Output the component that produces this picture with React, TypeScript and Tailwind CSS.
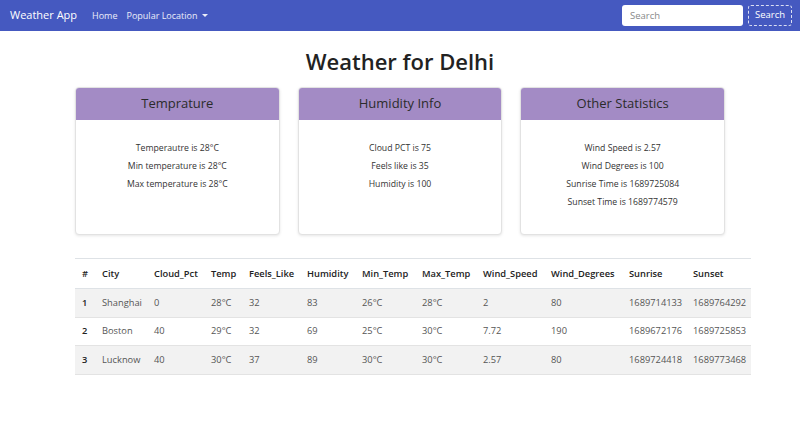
import React from 'react';

const cards = [
  { title: 'Temprature', lines: ['Temperautre is 28°C', 'Min temperature is 28°C', 'Max temperature is 28°C'] },
  { title: 'Humidity Info', lines: ['Cloud PCT is 75', 'Feels like is 35', 'Humidity is 100'] },
  {
    title: 'Other Statistics',
    lines: ['Wind Speed is 2.57', 'Wind Degrees is 100', 'Sunrise Time is 1689725084', 'Sunset Time is 1689774579'],
  },
];

const headers = ['#', 'City', 'Cloud_Pct', 'Temp', 'Feels_Like', 'Humidity', 'Min_Temp', 'Max_Temp', 'Wind_Speed', 'Wind_Degrees', 'Sunrise', 'Sunset'];
const widths = [20, 52, 57, 38, 58, 55, 60, 61, 68, 78, 64, 65];

const rows = [
  ['1', 'Shanghai', '0', '28°C', '32', '83', '26°C', '28°C', '2', '80', '1689714133', '1689764292'],
  ['2', 'Boston', '40', '29°C', '32', '69', '25°C', '30°C', '7.72', '190', '1689672176', '1689725853'],
  ['3', 'Lucknow', '40', '30°C', '37', '89', '30°C', '30°C', '2.57', '80', '1689724418', '1689773468'],
];

export default function App() {
  return (
    <div className="min-h-[448px] bg-white text-[#212529]" style={{ fontFamily: '"Open Sans", "Noto Sans", sans-serif' }}>
      {/* Navbar */}
      <nav className="flex h-[31px] items-center bg-[#4559c0] pl-[10px] pr-[8px]">
        <span className="text-[11px] text-white">Weather App</span>
        <a className="ml-[15px] text-[9px] text-white/90">Home</a>
        <a className="ml-[9px] flex items-center text-[9px] text-white/90">
          Popular Location
          <span className="ml-[5px] inline-block h-0 w-0 border-x-[3px] border-t-[3.5px] border-x-transparent border-t-white/90" />
        </a>
        <div className="ml-auto flex items-center gap-[5px]">
          <input
            placeholder="Search"
            className="h-[21px] w-[121px] rounded-[3px] bg-white px-[8px] text-[9.5px] text-[#555] placeholder:text-[#888] outline-none"
          />
          <button className="h-[21px] w-[44px] rounded-[3px] border border-dashed border-white/80 text-[9.5px] text-white">
            Search
          </button>
        </div>
      </nav>

      {/* Title */}
      <h1 className="mt-[14px] text-center text-[22px] font-semibold leading-[32px] text-[#222]">Weather for Delhi</h1>

      {/* Cards */}
      <div className="mx-[75px] mt-[10px] flex w-[650px] gap-[18px]">
        {cards.map(c => (
          <div key={c.title} className="h-[148px] w-[205px] overflow-hidden rounded-[4px] border border-[#e2e2e2] bg-white shadow-[0_1px_3px_rgba(0,0,0,0.1)]">
            <div className="flex h-[32px] items-center justify-center bg-[#a38bc5] text-[13px] text-[#2b2b2b]">{c.title}</div>
            <div className="flex flex-col items-center pt-[19px] text-[8.7px] leading-[18px] text-[#333]">
              {c.lines.map(l => (
                <p key={l}>{l}</p>
              ))}
            </div>
          </div>
        ))}
      </div>

      {/* Table */}
      <table className="mx-[75px] mt-[23px] w-[676px] table-fixed border-collapse text-[9.3px]">
        <colgroup>
          {widths.map((w, i) => (
            <col key={i} style={{ width: w }} />
          ))}
        </colgroup>
        <thead>
          <tr className="h-[30px] border-y border-[#dee2e6]">
            {headers.map(h => (
              <th key={h} className="pl-[7px] text-left font-semibold text-[#222]">
                {h}
              </th>
            ))}
          </tr>
        </thead>
        <tbody>
          {rows.map((r, ri) => (
            <tr key={ri} className={`h-[28.5px] border-b border-[#e3e3e3] ${ri % 2 === 0 ? 'bg-[#f2f2f2]' : 'bg-white'}`}>
              {r.map((v, i) => (
                <td key={i} className={`pl-[7px] whitespace-nowrap ${i === 0 ? 'font-semibold text-[#222]' : 'text-[#555]'}`}>
                  {v}
                </td>
              ))}
            </tr>
          ))}
        </tbody>
      </table>
    </div>
  );
}
